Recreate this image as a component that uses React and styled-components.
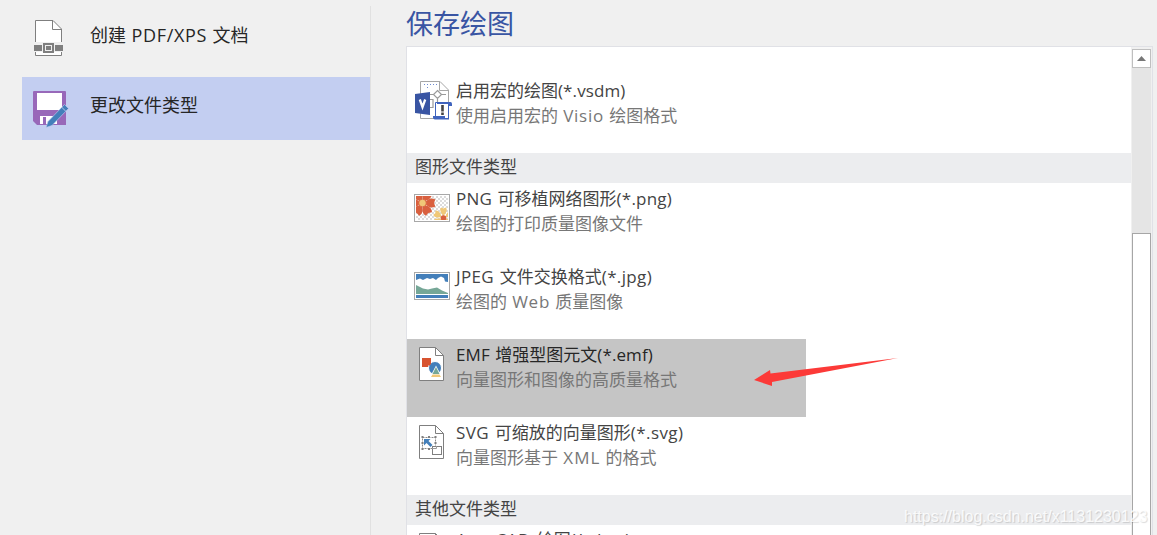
import React from "react";
import styled, { createGlobalStyle } from "styled-components";

const GlobalStyle = createGlobalStyle`
  * {
    box-sizing: border-box;
  }
  body {
    margin: 0;
    overflow: hidden;
    background: #f0f0f0;
    font-family: "Open Sans", "Noto Sans CJK SC", sans-serif;
  }
`;

const Page = styled.div`
  position: relative;
  display: flex;
  width: 1157px;
  height: 535px;
  overflow: hidden;
`;

const Sidebar = styled.nav`
  display: flex;
  flex-direction: column;
  gap: 7px;
  width: 371px;
  margin-top: 6px;
  padding: 1px 0 0 22px;
  border-right: 1px solid #e1e1e1;
`;

const NavItem = styled.div`
  display: flex;
  align-items: center;
  gap: 20px;
  height: 63px;
  padding-left: 8px;
  background: ${(props) => (props.$active ? "#c3cef1" : "transparent")};
`;

const NavLabel = styled.span`
  padding-bottom: 8px;
  font-size: 18px;
  line-height: 26px;
  white-space: pre;
  color: #262626;
`;

const Latin = styled.span`
  letter-spacing: ${(props) => props.$spacing || "0"};
`;

const Icon = styled.svg`
  display: block;
  flex: none;
  width: 40px;
  height: 40px;
`;

const Main = styled.main`
  display: flex;
  flex-direction: column;
  width: 747px;
  margin-left: 35px;
`;

const Title = styled.h1`
  flex: none;
  height: 46px;
  margin: 0;
  font-size: 27px;
  font-weight: 400;
  line-height: 48px;
  color: #3955a3;
`;

const Panel = styled.div`
  display: flex;
  flex: 1;
  min-height: 0;
  border: 1px solid #e0e1e6;
  border-bottom: 0;
  background: #fff;
`;

const List = styled.div`
  flex: 1;
  min-width: 0;
  padding-top: 28px;
  overflow: hidden;
`;

const Section = styled.div`
  height: 30px;
  padding-left: 8px;
  font-size: 17px;
  line-height: 28px;
  color: #444;
  background: #ecedef;
`;

const Row = styled.div`
  display: flex;
  gap: 4px;
  width: 399px;
  height: 78px;
  padding: 5px 0 0 5px;
  background: ${(props) => (props.$selected ? "#c5c5c5" : "transparent")};
`;

const RowText = styled.div`
  font-size: 17px;
  line-height: 25px;
  white-space: pre;
`;

const Name = styled.div`
  margin-top: ${(props) => (props.$raised ? "-3px" : "-2px")};
  word-spacing: 1px;
  color: ${(props) => (props.$selected ? "#262626" : "#444")};
`;

const Desc = styled.div`
  color: #777;
`;

const Scrollbar = styled.div`
  display: flex;
  flex-direction: column;
  width: 21px;
  padding: 2px 1px 0;
  background: #f0f0f0;
`;

const ScrollButton = styled.div`
  display: flex;
  align-items: center;
  justify-content: center;
  height: 19px;
  border: 1px solid #bfbfbf;
  background: #fff;
`;

const Track = styled.div`
  height: 165px;
  background: #e5e5e5;
`;

const Thumb = styled.div`
  flex: 1;
  border: 1px solid #a6a6a6;
  border-bottom: 0;
  background: #fff;
`;

const Arrow = styled.svg`
  position: absolute;
  left: 750px;
  top: 350px;
`;

const Watermark = styled.div`
  position: absolute;
  left: 904px;
  top: 506px;
  font-family: "Liberation Sans", sans-serif;
  font-size: 16px;
  line-height: 22px;
  white-space: nowrap;
  color: rgba(255, 255, 255, 0.85);
  text-shadow: 1px 1px 1px rgba(0, 0, 0, 0.15);
`;

const PdfIcon = () => (
  <Icon viewBox="0 0 40 40">
    <path d="M5.5 1.5H23L31.5 10V36.5H5.5Z" fill="#fff" stroke="#7f7f7f" />
    <path d="M22.5 1.5V10.5H31.5" fill="none" stroke="#7f7f7f" />
    <path d="M4 23H34V33H4Z" fill="#f0f0f0" />
    <path d="M4 26H12V32H4ZM25 26H33V32H25Z" fill="#7f7f7f" />
    <rect x="14" y="25" width="9" height="8" fill="#f0f0f0" stroke="#7f7f7f" strokeWidth="2" />
    <rect x="16" y="27" width="5" height="4" fill="#7f7f7f" />
  </Icon>
);

const SaveIcon = () => (
  <Icon viewBox="0 0 40 40">
    <path d="M4 2H35Q36 2 36 3V36H7L3 32V3Q3 2 4 2Z" fill="#9868b9" />
    <path d="M7 4H32V21H7ZM10 27H27V35H10Z" fill="#fff" />
    <path d="M13 28H16V35H13Z" fill="#9868b9" />
    <path d="M16 38.5L18 32.5L34.5 15.5L38.5 19.5L22 36.5Z" fill="#437fba" stroke="#c3cef1" strokeWidth="0.6" />
    <path d="M31.5 18L36 22.5" stroke="#c3cef1" strokeWidth="0.9" />
  </Icon>
);

const VsdmIcon = () => (
  <Icon viewBox="0 0 40 40">
    <path d="M8.5 1.5H28L36.5 10V38.5H8.5Z" fill="#fff" stroke="#a6a6a6" />
    <path d="M27.5 1.5V10.5H36.5" fill="none" stroke="#a6a6a6" />
    <path d="M12 4.5H25M15 7.5H18" stroke="#6f8bd0" strokeDasharray="1 2" />
    <path d="M25.5 10.5L29.5 14.5L25.5 18.5L21.5 14.5ZM18 14.5H21M30 14.5H34M25.5 18V22M18 19.5H21V27.5H18" fill="none" stroke="#9a9a9a" strokeWidth="1.2" />
    <path d="M3 14L18 12V35L3 33Z" fill="#3955a3" />
    <path d="M7.8 19.5L10.5 27L13.2 19.5" fill="none" stroke="#fff" strokeWidth="2.3" />
    <path d="M23.5 22.5H36.5V38.5H23.5Z" fill="#fff" stroke="#3f63bd" />
    <path d="M25 22H38.5Q40 22 40 24V26H36V24H25ZM21 36H33V38H37V39.5H23Q21 39.5 21 37.5Z" fill="#3f63bd" />
    <path d="M30.5 25V31.5M30.5 32.5V35" stroke="#444" strokeWidth="2.6" />
  </Icon>
);

const petals = [0, 60, 120, 180, 240, 300];

const PngIcon = () => (
  <Icon viewBox="0 0 40 40">
    <defs>
      <pattern id="checks" width="4" height="4" patternUnits="userSpaceOnUse">
        <path d="M0 0H2V2H0ZM2 2H4V4H2Z" fill="#dcdcdc" />
      </pattern>
      <clipPath id="pngClip">
        <rect x="4" y="8" width="32" height="24" />
      </clipPath>
    </defs>
    <rect x="2.5" y="6.5" width="35" height="27" fill="#fff" stroke="#a8a8a8" />
    <rect x="4" y="8" width="32" height="24" fill="url(#checks)" />
    <g clipPath="url(#pngClip)">
      {petals.map((angle) => (
        <path
          key={angle}
          d="M10.5 13C6 9.5 5 5.5 7 2.2L10.5 3.5L14 2.2C16 5.5 15 9.5 10.5 13Z"
          fill="#d9603f"
          transform={`rotate(${angle + 30} 10.5 15)`}
        />
      ))}
      <circle cx="10.5" cy="15" r="3.8" fill="#f0c878" stroke="#d9603f" strokeWidth="0.8" />
      {petals.map((angle) => (
        <path
          key={angle}
          d="M31.5 28C28 24 27.5 21 29.2 19.5L31.5 20.5L33.8 19.5C35.5 21 35 24 31.5 28Z"
          fill="#f0c878"
          transform={`rotate(${angle} 31.5 30)`}
        />
      ))}
      <circle cx="31.5" cy="30" r="2.8" fill="#d9603f" />
    </g>
  </Icon>
);

const JpegIcon = () => (
  <Icon viewBox="0 0 40 40">
    <rect x="2.5" y="6.5" width="35" height="27" fill="#fff" stroke="#a8a8a8" />
    <path d="M4 8H36V16L33 15.5L32 12L29 10.5L26 12L24 14L21 12L18 13L15 12L11 14L8 12.5L4 14Z" fill="#437fba" />
    <path d="M4 19L8 21L11 22.5L16 23.5L20 22.5L25 21.5L30 24.5L36 27V28H4Z" fill="#76a797" />
    <path d="M4 29H36V32H4Z" fill="#437fba" />
  </Icon>
);

const Sheet = () => (
  <>
    <path d="M7.5 3.5H23.5L31.5 11.5V36.5H7.5Z" fill="#fff" stroke="#7f7f7f" />
    <path d="M23.5 3.5V11.5H31.5" fill="none" stroke="#7f7f7f" />
  </>
);

const EmfIcon = () => (
  <Icon viewBox="0 0 40 40">
    <Sheet />
    <rect x="10" y="14" width="9" height="9" fill="#d75330" />
    <circle cx="23" cy="24" r="6.5" fill="#437fba" stroke="#fff" />
    <path d="M17 19L19 18V20L17 22Z" fill="#d75330" />
    <path d="M24 21.5L30.5 34H17.5Z" fill="#fff" />
    <path d="M24 23L27.5 30H20.5Z" fill="#76a797" />
    <path d="M20.5 30.5H27.5L29 33H19Z" fill="#f0c878" />
  </Icon>
);

const SvgIcon = () => (
  <Icon viewBox="0 0 40 40">
    <Sheet />
    <rect x="10.5" y="15.5" width="13" height="11" fill="none" stroke="#8a8a8a" strokeDasharray="2 1" />
    <path d="M9.5 15H11.5M16 15H18M22.5 15H24.5M9.5 21H11.5M22.5 21H24.5M9.5 27H11.5M16 27H18" stroke="#7f7f7f" strokeWidth="2" />
    <path d="M12 17H18.5L16.5 19L20.5 23L18.5 25L14.5 21L12 23.5Z" fill="#437fba" />
    <rect x="20.5" y="24.5" width="9" height="8" fill="#fff" stroke="#7f7f7f" />
    <path d="M20 26.5H24.5V24" fill="none" stroke="#9a9a9a" />
  </Icon>
);

const CadIcon = () => (
  <Icon viewBox="0 0 40 40">
    <Sheet />
  </Icon>
);

const imageTypes = [
  { icon: PngIcon, name: "PNG 可移植网络图形(*.png)", desc: "绘图的打印质量图像文件", spacing: "0.2px" },
  { icon: JpegIcon, name: "JPEG 文件交换格式(*.jpg)", desc: "绘图的 Web 质量图像", spacing: "0.35px", descSpacing: "0.75px" },
  { icon: EmfIcon, name: "EMF 增强型图元文(*.emf)", desc: "向量图形和图像的高质量格式", spacing: "0.1px" },
  { icon: SvgIcon, name: "SVG 可缩放的向量图形(*.svg)", desc: "向量图形基于 XML 的格式", spacing: "0.4px", descSpacing: "0.95px" },
];

// Only the latin runs are tracked, the CJK glyphs keep their full width
const spaced = (text, spacing) =>
  text.split(/([\x20-\x7e]+)/).map((part, i) =>
    i % 2 ? (
      <Latin key={i} $spacing={spacing}>
        {part}
      </Latin>
    ) : (
      part
    )
  );

const FileType = ({ icon: TypeIcon, name, desc, selected, raised, spacing, descSpacing }) => (
  <Row $selected={selected}>
    <TypeIcon />
    <RowText>
      <Name $selected={selected} $raised={raised}>
        {spaced(name, spacing)}
      </Name>
      <Desc>{spaced(desc, descSpacing)}</Desc>
    </RowText>
  </Row>
);

const App = () => {
  const selectedIndex = 2;

  return (
    <Page>
      <GlobalStyle />
      <Sidebar>
        <NavItem>
          <PdfIcon />
          <NavLabel>{spaced("创建 PDF/XPS 文档", "0.7px")}</NavLabel>
        </NavItem>
        <NavItem $active>
          <SaveIcon />
          <NavLabel>更改文件类型</NavLabel>
        </NavItem>
      </Sidebar>

      <Main>
        <Title>保存绘图</Title>
        <Panel>
          <List>
            <FileType
              icon={VsdmIcon}
              name="启用宏的绘图(*.vsdm)"
              desc="使用启用宏的 Visio 绘图格式"
              spacing="0.1px"
              descSpacing="0.75px"
            />
            <Section>图形文件类型</Section>
            {imageTypes.map((type, i) => (
              <FileType key={type.name} {...type} selected={i === selectedIndex} />
            ))}
            <Section>其他文件类型</Section>
            <FileType icon={CadIcon} name="AutoCAD 绘图(*.dwg)" desc="AutoCAD 绘图格式" spacing="0.5px" raised />
          </List>
          <Scrollbar>
            <ScrollButton>
              <svg width="9" height="5" viewBox="0 0 9 5">
                <path d="M0 5L4.5 0L9 5Z" fill="#777" />
              </svg>
            </ScrollButton>
            <Track />
            <Thumb />
          </Scrollbar>
        </Panel>
      </Main>

      <Arrow width="152" height="40" viewBox="0 0 152 40">
        <path d="M4 30L20 20L20.5 23.5L148 8L22 32L22 36Z" fill="#fc3a38" />
      </Arrow>
      <Watermark>https://blog.csdn.net/x1131230123</Watermark>
    </Page>
  );
};

export default App;
